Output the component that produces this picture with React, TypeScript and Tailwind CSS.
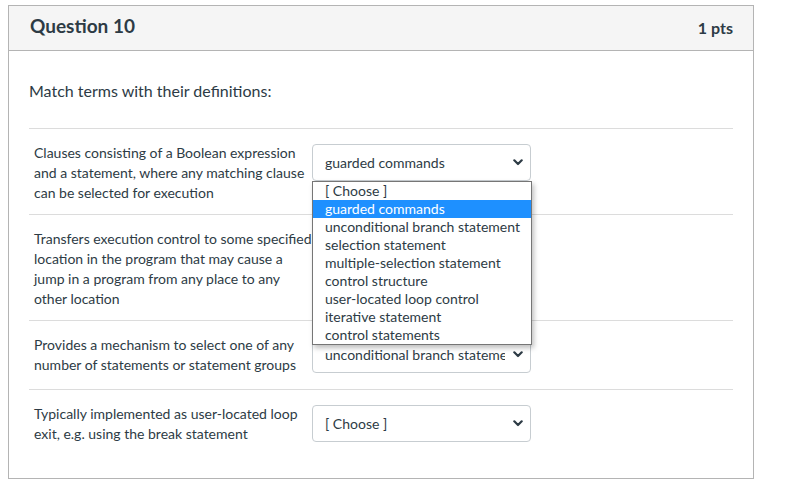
const OPTIONS = [
  '[ Choose ]',
  'guarded commands',
  'unconditional branch statement',
  'selection statement',
  'multiple-selection statement',
  'control structure',
  'user-located loop control',
  'iterative statement',
  'control statements',
];

const ROWS = [
  {
    text: 'Clauses consisting of a Boolean expression and a statement, where any matching clause can be selected for execution',
    value: 'guarded commands',
    open: true,
  },
  {
    text: 'Transfers execution control to some specified location in the program that may cause a jump in a program from any place to any other location',
    value: '[ Choose ]',
  },
  {
    text: 'Provides a mechanism to select one of any number of statements or statement groups',
    value: 'unconditional branch statement',
  },
  {
    text: 'Typically implemented as user-located loop exit, e.g. using the break statement',
    value: '[ Choose ]',
    last: true,
  },
];

function Chevron() {
  return (
    <svg width="10" height="7" viewBox="0 0 10 7" className="shrink-0">
      <path d="M1.3 1.3 L5 5 L8.7 1.3" fill="none" stroke="#2d3b45" strokeWidth="2.2" strokeLinecap="round" strokeLinejoin="round" />
    </svg>
  );
}

function Dropdown({ value, open }: { value: string; open?: boolean }) {
  return (
    <div className="relative mt-px mb-[16px]">
      <div className="flex h-[37px] w-[219px] items-center rounded-[4px] border border-[#c7cdd1] bg-white pl-[12px] pr-[6px] text-[14px] text-[#2d3b45]">
        <span className="w-[180px] overflow-hidden whitespace-nowrap">{value}</span>
        <span className="flex flex-1 justify-end pr-[1px]">
          <Chevron />
        </span>
      </div>
      {open && (
        <ul className="absolute left-0 top-[37px] z-10 w-[220px] border border-[#767676] bg-white shadow-[2px_3px_5px_rgba(0,0,0,0.25)]">
          {OPTIONS.map((o) => (
            <li
              key={o}
              className={
                o === value
                  ? 'h-[18px] bg-[#1e90ff] pl-[12px] text-[14px] leading-[17px] text-white'
                  : 'h-[18px] pl-[12px] text-[14px] leading-[17px] text-[#2d3b45]'
              }
            >
              {o}
            </li>
          ))}
        </ul>
      )}
    </div>
  );
}

export default function App() {
  return (
    <div className="min-h-[487px] bg-white pt-[5px] pl-2" style={{ fontFamily: 'Lato, "Open Sans", sans-serif' }}>
      <div className="w-[746px] h-[474px] border border-[#b4b4b4] text-[#2d3b45]">
        {/* header */}
        <div className="flex h-[45px] items-center justify-between border-b border-[#b4b4b4] bg-[#f5f5f5] pb-[5px] pl-[21px] pr-[20px]">
          <h2 className="text-[19px] font-bold leading-none">Question 10</h2>
          <span className="mt-[4px] text-[16px] font-bold leading-none">1 pts</span>
        </div>

        {/* body */}
        <div className="pl-[20px] pr-[20px] pt-[28px]">
          <p className="mb-[25px] text-[16px] leading-[24px]">Match terms with their definitions:</p>
          <div className="border-t border-[#dcdcdc]">
            {ROWS.map((r, i) => (
              <div
                key={i}
                className={r.last ? 'flex items-start pt-[14px]' : 'flex items-start border-b border-[#dcdcdc] pt-[14px]'}
              >
                <p className="w-[283px] pb-[11px] pl-[5px] text-[14px] leading-[20px]">{r.text}</p>
                <Dropdown value={r.value} open={r.open} />
              </div>
            ))}
          </div>
        </div>
      </div>
    </div>
  );
}
